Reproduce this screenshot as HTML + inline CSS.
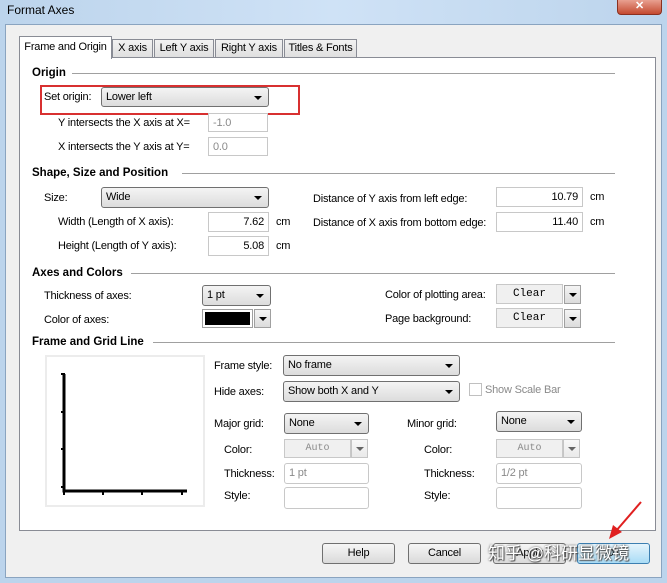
<!DOCTYPE html><html><head><meta charset="utf-8"><style>
*{box-sizing:border-box}body{margin:0;width:667px;height:583px;overflow:hidden;background:#bcd4ec;font-family:"Liberation Sans",Arial,sans-serif;font-size:11px;letter-spacing:-0.2px;color:#000;position:relative}
.a{position:absolute;white-space:nowrap}
.t{position:absolute;line-height:14px;white-space:nowrap}
.h{position:absolute;font-weight:bold;line-height:14px;white-space:nowrap;font-size:11.5px;letter-spacing:0}
.ln{position:absolute;height:1px;background:#a0a0a0}
.dd{position:absolute;border:1px solid #707070;border-radius:3px;background:linear-gradient(#f4f4f4,#dcdcdc);padding-left:4px;line-height:18px;white-space:nowrap}
.dd:after{content:"";position:absolute;right:6px;top:8px;border-left:4px solid transparent;border-right:4px solid transparent;border-top:4px solid #000}
.in{position:absolute;border:1px solid #c8c8c8;background:#fff;line-height:18px;padding:0 4px;white-space:nowrap}
.dis{color:#8a8a8a}
.btn{position:absolute;border:1px solid #707070;border-radius:3px;background:linear-gradient(#f6f6f6,#dadada);text-align:center;line-height:19px}
.sb{position:absolute;border:1px solid #a0a0a0;background:linear-gradient(#f4f4f4,#dcdcdc);width:17px}
.sb:after{content:"";position:absolute;left:4px;top:7px;border-left:4px solid transparent;border-right:4px solid transparent;border-top:4px solid #000}
.cl{position:absolute;border:1px solid #c8c8c8;background:#f0f0f0;text-align:center;font-family:"Liberation Mono",monospace;font-size:11px;line-height:18px;letter-spacing:0}
.tab{position:absolute;top:39px;height:19px;border:1px solid #898c95;border-bottom:none;background:linear-gradient(#f2f2f2,#dedede);line-height:17px;text-align:center;white-space:nowrap}
</style></head><body>
<div class="a" style="left:0;top:0;width:667px;height:24px;background:linear-gradient(90deg,#bcd4ec,#cfe2f6 50%,#bcd4ec)"></div>
<div class="t" style="left:7px;top:3px;font-size:12px;letter-spacing:0">Format Axes</div>
<div class="a" style="left:617px;top:0;width:45px;height:15px;background:linear-gradient(#e8a090,#c44a30);border:1px solid #8a3020;border-top:none;border-radius:0 0 4px 4px;color:#fff;text-align:center;font-weight:bold;line-height:13px">✕</div>
<div class="a" style="left:5px;top:24px;width:657px;height:554px;background:#f0f0f0;border:1px solid #8aa4c0"></div>
<div class="tab" style="left:112px;width:41px">X axis</div>
<div class="tab" style="left:154px;width:60px">Left Y axis</div>
<div class="tab" style="left:215px;width:68px">Right Y axis</div>
<div class="tab" style="left:284px;width:73px">Titles &amp; Fonts</div>
<div class="a" style="left:19px;top:57px;width:637px;height:474px;background:#fff;border:1px solid #898c95"></div>
<div class="a" style="left:19px;top:36px;width:93px;height:23px;background:#fff;border:1px solid #898c95;border-bottom:none;text-align:center;line-height:20px">Frame and Origin</div>

<div class="h" style="left:32px;top:66px">Origin</div><div class="ln" style="left:72px;top:73px;width:543px"></div>
<div class="a" style="left:40px;top:85px;width:260px;height:30px;border:2px solid #d83030"></div>
<div class="t" style="left:44px;top:90px">Set origin:</div>
<div class="dd" style="left:101px;top:87px;width:168px;height:20px">Lower left</div>
<div class="t" style="left:58px;top:116px">Y intersects the X axis at X=</div>
<div class="in dis" style="left:208px;top:113px;width:60px;height:19px">-1.0</div>
<div class="t" style="left:58px;top:140px">X intersects the Y axis at Y=</div>
<div class="in dis" style="left:208px;top:137px;width:60px;height:19px">0.0</div>

<div class="h" style="left:32px;top:166px">Shape, Size and Position</div><div class="ln" style="left:182px;top:173px;width:433px"></div>
<div class="t" style="left:44px;top:191px">Size:</div>
<div class="dd" style="left:101px;top:187px;width:168px;height:21px">Wide</div>
<div class="t" style="left:58px;top:215px">Width (Length of X axis):</div>
<div class="in" style="left:208px;top:212px;width:61px;height:20px;text-align:right">7.62</div><div class="t" style="left:276px;top:215px">cm</div>
<div class="t" style="left:58px;top:239px">Height (Length of Y axis):</div>
<div class="in" style="left:208px;top:236px;width:61px;height:20px;text-align:right">5.08</div><div class="t" style="left:276px;top:239px">cm</div>
<div class="t" style="left:313px;top:192px">Distance of Y axis from left edge:</div>
<div class="in" style="left:496px;top:187px;width:87px;height:20px;text-align:right">10.79</div><div class="t" style="left:590px;top:190px">cm</div>
<div class="t" style="left:313px;top:216px">Distance of X axis from bottom edge:</div>
<div class="in" style="left:496px;top:212px;width:87px;height:20px;text-align:right">11.40</div><div class="t" style="left:590px;top:215px">cm</div>

<div class="h" style="left:32px;top:266px">Axes and Colors</div><div class="ln" style="left:131px;top:273px;width:484px"></div>
<div class="t" style="left:44px;top:289px">Thickness of axes:</div>
<div class="dd" style="left:202px;top:285px;width:69px;height:21px">1 pt</div>
<div class="t" style="left:44px;top:313px">Color of axes:</div>
<div class="a" style="left:202px;top:309px;width:51px;height:19px;border:1px solid #a0a0a0;background:#fff;padding:2px"><div style="width:100%;height:100%;background:#000"></div></div>
<div class="sb" style="left:254px;top:309px;height:19px"></div>
<div class="t" style="left:385px;top:288px">Color of plotting area:</div>
<div class="cl" style="left:496px;top:284px;width:67px;height:20px">Clear</div><div class="sb" style="left:564px;top:285px;height:19px"></div>
<div class="t" style="left:385px;top:312px">Page background:</div>
<div class="cl" style="left:496px;top:308px;width:67px;height:20px">Clear</div><div class="sb" style="left:564px;top:309px;height:19px"></div>

<div class="h" style="left:32px;top:335px">Frame and Grid Line</div><div class="ln" style="left:153px;top:342px;width:462px"></div>
<div class="a" style="left:45px;top:355px;width:160px;height:152px;border:2px solid #ececec"></div>
<svg class="a" style="left:45px;top:355px" width="160" height="152"><path d="M19 19V136H142" stroke="#000" stroke-width="3" fill="none"/><path d="M16 19h4M16 57h4M16 94h4M16 132h4M19 136v4M58 136v4M97 136v4M137 136v4" stroke="#000" stroke-width="2"/></svg>
<div class="t" style="left:214px;top:359px">Frame style:</div>
<div class="dd" style="left:283px;top:355px;width:177px;height:21px">No frame</div>
<div class="t" style="left:214px;top:385px">Hide axes:</div>
<div class="dd" style="left:283px;top:381px;width:177px;height:21px">Show both X and Y</div>
<div class="a" style="left:469px;top:383px;width:13px;height:13px;border:1px solid #c0c0c0;background:#fff"></div>
<div class="t dis" style="left:485px;top:383px">Show Scale Bar</div>
<div class="t" style="left:214px;top:417px">Major grid:</div>
<div class="dd" style="left:284px;top:413px;width:85px;height:21px">None</div>
<div class="t" style="left:407px;top:417px">Minor grid:</div>
<div class="dd" style="left:496px;top:411px;width:86px;height:21px">None</div>
<div class="t" style="left:224px;top:443px">Color:</div>
<div class="cl dis" style="left:284px;top:439px;width:67px;height:19px;font-size:10px">Auto</div><div class="sb" style="left:351px;top:439px;height:19px;opacity:.6"></div>
<div class="t" style="left:424px;top:443px">Color:</div>
<div class="cl dis" style="left:496px;top:439px;width:67px;height:19px;font-size:10px">Auto</div><div class="sb" style="left:563px;top:439px;height:19px;opacity:.6"></div>
<div class="t" style="left:224px;top:467px">Thickness:</div>
<div class="in dis" style="left:284px;top:463px;width:85px;height:21px;border-radius:3px">1 pt</div>
<div class="t" style="left:424px;top:467px">Thickness:</div>
<div class="in dis" style="left:496px;top:463px;width:86px;height:21px;border-radius:3px">1/2 pt</div>
<div class="t" style="left:224px;top:489px">Style:</div>
<div class="in" style="left:284px;top:487px;width:85px;height:22px;border-radius:3px"></div>
<div class="t" style="left:424px;top:489px">Style:</div>
<div class="in" style="left:496px;top:487px;width:86px;height:22px;border-radius:3px"></div>

<div class="btn" style="left:322px;top:543px;width:73px;height:21px">Help</div>
<div class="btn" style="left:408px;top:543px;width:73px;height:21px">Cancel</div>
<div class="btn" style="left:493px;top:543px;width:73px;height:21px">Apply</div>
<div class="btn" style="left:577px;top:543px;width:73px;height:21px;border-color:#3c7fb1;background:linear-gradient(#e5f4fc,#a9dcf6)">OK</div>
<div class="t" style="left:488px;top:544px;font-size:17px;line-height:20px;letter-spacing:0;color:#fff;text-shadow:0 0 2px #444,1px 1px 1px #555;font-family:'Liberation Sans','Noto Sans CJK SC',sans-serif">知乎 @科研显微镜</div>
<svg class="a" style="left:600px;top:498px" width="50" height="45"><path d="M41 4L16 33" stroke="#e02020" stroke-width="2"/><path d="M9 41L13 27L22 34Z" fill="#e02020"/></svg>
</body></html>
